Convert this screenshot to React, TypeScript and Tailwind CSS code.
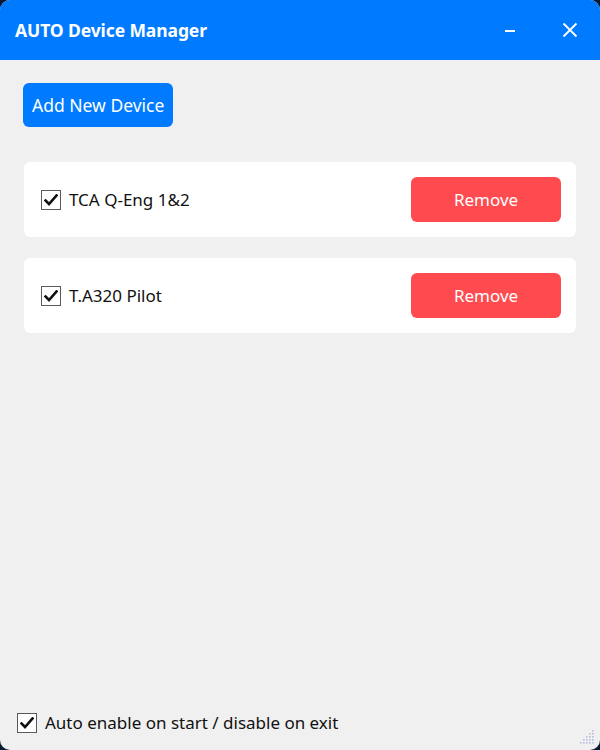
import React, { useState } from 'react'

type Device = {
  id: number
  name: string
  enabled: boolean
}

function Check({ checked, onChange }: { checked: boolean; onChange: () => void }) {
  return (
    <button
      type="button"
      onClick={onChange}
      className="w-5 h-5 shrink-0 border border-[#5a5a5a] bg-white flex items-center justify-center"
    >
      {checked && (
        <svg width="14" height="12" viewBox="0 0 14 12">
          <path d="M1.5 6.5 L5 10 L12.5 1.5" fill="none" stroke="#111" strokeWidth="2.6" strokeLinecap="square" />
        </svg>
      )}
    </button>
  )
}

export default function App() {
  const [devices, setDevices] = useState<Device[]>([
    { id: 1, name: 'TCA Q-Eng 1&2', enabled: true },
    { id: 2, name: 'T.A320 Pilot', enabled: true }
  ])
  const [autoEnable, setAutoEnable] = useState(true)

  const toggle = (id: number) =>
    setDevices(devices.map(d => (d.id === id ? { ...d, enabled: !d.enabled } : d)))
  const remove = (id: number) => setDevices(devices.filter(d => d.id !== id))

  return (
    <div className="w-[600px] h-[750px] bg-[#0b1a33] font-['Noto_Sans',sans-serif]">
      <div className="w-full h-full bg-[#f0f0f0] rounded-[10px] overflow-hidden flex flex-col relative">
        {/* Title bar */}
        <div className="h-[60px] bg-[#007bff] flex items-center pl-[15px] shrink-0">
          <h1 className="text-white font-bold text-[17.5px] flex-1 tracking-[-0.1px]">AUTO Device Manager</h1>
          <button className="w-[60px] h-[60px] flex items-center justify-center">
            <svg width="12" height="12" viewBox="0 0 12 12">
              <path d="M1 7 H11" stroke="white" strokeWidth="2" />
            </svg>
          </button>
          <button className="w-[60px] h-[60px] flex items-center justify-center">
            <svg width="16" height="16" viewBox="0 0 16 16">
              <path d="M1.5 1.5 L14.5 14.5 M14.5 1.5 L1.5 14.5" stroke="white" strokeWidth="1.8" />
            </svg>
          </button>
        </div>

        {/* Content */}
        <div className="flex-1 px-6 pt-[23px]">
          <button className="-ml-px h-[44px] px-[9px] rounded-md bg-[#007bff] text-white text-[17.5px]">
            Add New Device
          </button>

          <div className="mt-[35px] flex flex-col gap-[21px]">
            {devices.map(device => (
              <div key={device.id} className="h-[75px] bg-white rounded-md flex items-center pl-[17px] pr-[15px]">
                <Check checked={device.enabled} onChange={() => toggle(device.id)} />
                <span className="ml-2 text-[17px] text-[#111] flex-1">{device.name}</span>
                <button
                  onClick={() => remove(device.id)}
                  className="w-[150px] h-[45px] rounded-md bg-[#ff4a4f] text-white text-[17px]"
                >
                  Remove
                </button>
              </div>
            ))}
          </div>
        </div>

        {/* Footer */}
        <div className="h-[37px] flex items-start pl-[17px] shrink-0">
          <Check checked={autoEnable} onChange={() => setAutoEnable(!autoEnable)} />
          <span className="ml-2 text-[17px] text-[#111] leading-5">Auto enable on start / disable on exit</span>
        </div>

        {/* Resize grip */}
        <svg className="absolute right-1 bottom-1" width="20" height="20" viewBox="0 0 20 20">
          {[
            [16, 4], [13, 7], [16, 7], [10, 10], [13, 10], [16, 10],
            [7, 13], [10, 13], [13, 13], [16, 13], [4, 16], [7, 16], [10, 16], [13, 16], [16, 16]
          ].map(([x, y], i) => (
            <rect key={i} x={x} y={y} width="1.6" height="1.6" fill="#b8bce0" />
          ))}
        </svg>
      </div>
    </div>
  )
}
